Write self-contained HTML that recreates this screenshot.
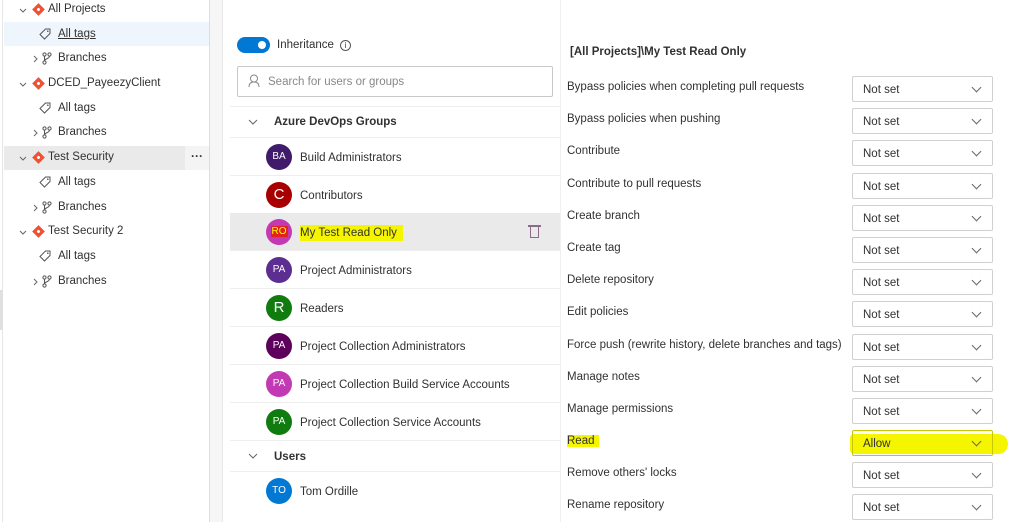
<!DOCTYPE html><html><head><style>
*{margin:0;padding:0;box-sizing:border-box}
body{width:1024px;height:522px;overflow:hidden;background:#fff;font-family:"Liberation Sans",sans-serif;font-size:11.5px;color:#323130;position:relative}
.abs{position:absolute}
.tr{position:absolute;left:4px;width:205px;height:25px;line-height:25px;white-space:nowrap}
.tr svg{position:absolute}
.git{position:absolute;width:9px;height:9px;background:#f05133;transform:rotate(45deg);top:8px}
.git:after{content:"";position:absolute;left:3px;top:3px;width:3px;height:3px;background:#fff;border-radius:50%}
.row{position:absolute;left:230px;width:330px;height:38px;border-bottom:1px solid #eee}
.av{position:absolute;left:36px;top:6px;width:26px;height:26px;border-radius:50%;color:#fff;font-size:10px;text-align:center;line-height:26px}
.nm{position:absolute;left:70px;top:1px;line-height:38px;font-size:11.5px}
.pl{position:absolute;left:567px;font-size:11.5px}
.dd{position:absolute;left:852px;width:141px;height:26px;border:1px solid #d0d0d0;border-radius:2px;padding-left:10px;line-height:26px;font-size:11.5px}
.dd:after{content:"";position:absolute;right:12px;top:7px;width:6px;height:6px;border-right:1px solid #666;border-bottom:1px solid #666;transform:rotate(45deg)}
</style></head><body>
<div class="abs" style="left:2px;top:0;width:1px;height:522px;background:#e6e6e6"></div>
<div class="abs" style="left:0;top:290px;width:3px;height:40px;background:#e0e0e0"></div>
<div class="abs" style="left:209px;top:0;width:14px;height:522px;background:#f6f6f6;border-left:1px solid #ddd;border-right:1px solid #e8e8e8"></div>
<div class="abs" style="left:4px;top:22px;width:205px;height:24px;background:#eef5fc"></div>
<div class="abs" style="left:4px;top:146px;width:181px;height:24px;background:#eaeaea"></div>
<div class="abs" style="left:185px;top:146px;width:24px;height:24px;background:#f4f4f4;text-align:center;line-height:20px;font-weight:bold;font-size:12px">···</div>
<svg width="0" height="0" style="position:absolute"><defs>
<symbol id="dn" viewBox="0 0 8 5"><path d="M1 1l3 3 3-3" fill="none" stroke="#666"/></symbol>
<symbol id="rt" viewBox="0 0 5 8"><path d="M1 1l3 3-3 3" fill="none" stroke="#666"/></symbol>
<symbol id="tag" viewBox="0 0 12 12"><path d="M1 6.5L6.5 1H11v4.5L5.5 11z" fill="none" stroke="#555"/><circle cx="8.8" cy="3.2" r=".8" fill="#555"/></symbol>
<symbol id="br" viewBox="0 0 10 13"><circle cx="2.5" cy="2.5" r="1.6" fill="none" stroke="#555"/><circle cx="7.5" cy="2.5" r="1.6" fill="none" stroke="#555"/><circle cx="2.5" cy="10.5" r="1.6" fill="none" stroke="#555"/><path d="M2.5 4v5M7.5 4c0 3-5 2.5-5 5" fill="none" stroke="#555"/></symbol>
</defs></svg>
<!-- tree -->
<div class="tr" style="top:-3px"><svg style="left:15px;top:11px" width="8" height="5"><use href="#dn"/></svg><span class="git" style="left:30px"></span><span style="position:absolute;left:44px">All Projects</span></div>
<div class="tr" style="top:22px"><svg style="left:35px;top:6px" width="12" height="12"><use href="#tag"/></svg><span style="position:absolute;left:54px;text-decoration:underline">All tags</span></div>
<div class="tr" style="top:46px"><svg style="left:29px;top:9px" width="5" height="8"><use href="#rt"/></svg><svg style="left:38px;top:6px" width="10" height="13"><use href="#br"/></svg><span style="position:absolute;left:54px">Branches</span></div>
<div class="tr" style="top:71px"><svg style="left:15px;top:11px" width="8" height="5"><use href="#dn"/></svg><span class="git" style="left:30px"></span><span style="position:absolute;left:44px">DCED_PayeezyClient</span></div>
<div class="tr" style="top:96px"><svg style="left:35px;top:6px" width="12" height="12"><use href="#tag"/></svg><span style="position:absolute;left:54px">All tags</span></div>
<div class="tr" style="top:120px"><svg style="left:29px;top:9px" width="5" height="8"><use href="#rt"/></svg><svg style="left:38px;top:6px" width="10" height="13"><use href="#br"/></svg><span style="position:absolute;left:54px">Branches</span></div>
<div class="tr" style="top:145px"><svg style="left:15px;top:11px" width="8" height="5"><use href="#dn"/></svg><span class="git" style="left:30px"></span><span style="position:absolute;left:44px">Test Security</span></div>
<div class="tr" style="top:170px"><svg style="left:35px;top:6px" width="12" height="12"><use href="#tag"/></svg><span style="position:absolute;left:54px">All tags</span></div>
<div class="tr" style="top:195px"><svg style="left:29px;top:9px" width="5" height="8"><use href="#rt"/></svg><svg style="left:38px;top:6px" width="10" height="13"><use href="#br"/></svg><span style="position:absolute;left:54px">Branches</span></div>
<div class="tr" style="top:219px"><svg style="left:15px;top:11px" width="8" height="5"><use href="#dn"/></svg><span class="git" style="left:30px"></span><span style="position:absolute;left:44px">Test Security 2</span></div>
<div class="tr" style="top:244px"><svg style="left:35px;top:6px" width="12" height="12"><use href="#tag"/></svg><span style="position:absolute;left:54px">All tags</span></div>
<div class="tr" style="top:269px"><svg style="left:29px;top:9px" width="5" height="8"><use href="#rt"/></svg><svg style="left:38px;top:6px" width="10" height="13"><use href="#br"/></svg><span style="position:absolute;left:54px">Branches</span></div>
<!-- middle -->
<div class="abs" style="left:237px;top:37px;width:33px;height:16px;border-radius:8px;background:#0078d4"><div style="position:absolute;right:4px;top:4px;width:8px;height:8px;border-radius:50%;background:#fff"></div></div>
<div class="abs" style="left:277px;top:39px;font-size:11.5px">Inheritance</div>
<div class="abs" style="left:340px;top:40px;width:11px;height:11px;border:1px solid #555;border-radius:50%;font-size:8px;text-align:center;line-height:9px">i</div>
<div class="abs" style="left:237px;top:66px;width:316px;height:31px;border:1px solid #c8c8c8;border-radius:2px"></div>
<svg class="abs" style="left:248px;top:74px" width="12" height="14"><circle cx="6" cy="4.5" r="3.5" fill="none" stroke="#888"/><path d="M1 13c0-4 2.5-5 5-5s5 1 5 5" fill="none" stroke="#888"/></svg>
<div class="abs" style="left:268px;top:76px;color:#888">Search for users or groups</div>
<div class="abs" style="left:230px;top:106px;width:330px;height:1px;background:#eee"></div>
<svg class="abs" style="left:248px;top:119px" width="10" height="6"><path d="M1 1l4 4 4-4" fill="none" stroke="#666"/></svg>
<div class="abs" style="left:274px;top:116px;font-weight:bold;font-size:11.5px">Azure DevOps Groups</div>
<div class="abs" style="left:230px;top:137px;width:330px;height:1px;background:#eee"></div>
<div class="row" style="top:138px"><div class="av" style="background:#401b6c">BA</div><div class="nm">Build Administrators</div></div>
<div class="row" style="top:176px"><div class="av" style="background:#a80000;font-size:15px">C</div><div class="nm">Contributors</div></div>
<div class="row" style="top:213px;background:#eaeaea"><div class="av" style="background:#c239b3;color:#ff0"><span style="background:#e2231a;padding:0 1px">RO</span></div><div class="nm"><span style="background:#f5f500;padding:2px 6px 2px 0">My Test Read Only</span></div><div style="position:absolute;left:300px;top:14px;width:9px;height:11px;border:1.5px solid #8a6b8a;border-top:none"></div><div style="position:absolute;left:298px;top:12px;width:13px;height:1.5px;background:#8a6b8a"></div></div>
<div class="row" style="top:251px"><div class="av" style="background:#5c2e91">PA</div><div class="nm">Project Administrators</div></div>
<div class="row" style="top:289px"><div class="av" style="background:#107c10;font-size:15px">R</div><div class="nm">Readers</div></div>
<div class="row" style="top:327px"><div class="av" style="background:#5c005c">PA</div><div class="nm">Project Collection Administrators</div></div>
<div class="row" style="top:365px"><div class="av" style="background:#c239b3">PA</div><div class="nm">Project Collection Build Service Accounts</div></div>
<div class="row" style="top:403px"><div class="av" style="background:#107c10">PA</div><div class="nm">Project Collection Service Accounts</div></div>
<svg class="abs" style="left:248px;top:453px" width="10" height="6"><path d="M1 1l4 4 4-4" fill="none" stroke="#666"/></svg>
<div class="abs" style="left:274px;top:451px;font-weight:bold">Users</div>
<div class="abs" style="left:230px;top:471px;width:330px;height:1px;background:#eee"></div>
<div class="row" style="top:472px;border:none"><div class="av" style="background:#0078d4">TO</div><div class="nm">Tom Ordille</div></div>
<div class="abs" style="left:560px;top:0;width:1px;height:522px;background:#f0f0f0"></div>
<!-- right -->
<div class="abs" style="left:570px;top:46px;font-weight:bold">[All Projects]\My Test Read Only</div>
<div class="pl" style="top:81px">Bypass policies when completing pull requests</div><div class="dd" style="top:76px">Not set</div>
<div class="pl" style="top:113px">Bypass policies when pushing</div><div class="dd" style="top:108px">Not set</div>
<div class="pl" style="top:145px">Contribute</div><div class="dd" style="top:140px">Not set</div>
<div class="pl" style="top:178px">Contribute to pull requests</div><div class="dd" style="top:173px">Not set</div>
<div class="pl" style="top:210px">Create branch</div><div class="dd" style="top:205px">Not set</div>
<div class="pl" style="top:242px">Create tag</div><div class="dd" style="top:237px">Not set</div>
<div class="pl" style="top:274px">Delete repository</div><div class="dd" style="top:269px">Not set</div>
<div class="pl" style="top:306px">Edit policies</div><div class="dd" style="top:301px">Not set</div>
<div class="pl" style="top:339px">Force push (rewrite history, delete branches and tags)</div><div class="dd" style="top:334px">Not set</div>
<div class="pl" style="top:371px">Manage notes</div><div class="dd" style="top:366px">Not set</div>
<div class="pl" style="top:403px">Manage permissions</div><div class="dd" style="top:398px">Not set</div>
<div class="pl" style="top:435px;background:#f5f500;padding-right:4px">Read</div>
<div class="abs" style="left:850px;top:434px;width:158px;height:20px;background:#f5f500;border-radius:4px 10px 10px 4px"></div>
<div class="dd" style="top:430px;border-color:#c8c800">Allow</div>
<div class="pl" style="top:467px">Remove others' locks</div><div class="dd" style="top:462px">Not set</div>
<div class="pl" style="top:499px">Rename repository</div><div class="dd" style="top:494px">Not set</div>
</body></html>
